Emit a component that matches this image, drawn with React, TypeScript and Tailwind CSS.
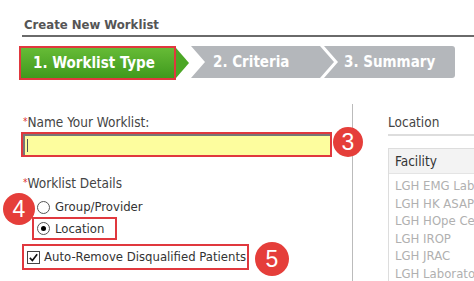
const font = "font-['DejaVu_Sans_Condensed','DejaVu_Sans',sans-serif]"

const facilities = ['LGH EMG Lab', 'LGH HK ASAP', 'LGH HOpe Ce', 'LGH IROP', 'LGH JRAC', 'LGH Laborato']

function Callout({ n, className }: { n: number; className: string }) {
  return (
    <div
      className={`absolute flex items-center justify-center rounded-full bg-[#e53e3a] text-white text-[23px] leading-none font-['Liberation_Sans',sans-serif] ${className}`}
    >
      {n}
    </div>
  )
}

export default function App() {
  return (
    <div className={`relative w-[474px] h-[281px] overflow-hidden bg-white ${font}`}>
      {/* title */}
      <div className="pl-[22px] pt-[18px]">
        <div className="border-b-2 border-[#6a6a6a] pb-[3px] pl-[2px] text-[13px] leading-[14px] font-bold text-[#555]">
          Create New Worklist
        </div>
      </div>

      {/* steps */}
      <div className="mt-[9px] flex h-[34px] items-start pl-[19px]">
        <div className="h-[34px] w-[157px] border-2 border-[#e0383e]">
          <div className="flex h-full items-center bg-gradient-to-b from-[#66bb36] to-[#3f9a1d] pl-[12px] text-[15px] font-bold text-white">
            1. Worklist Type
          </div>
        </div>
        <div className="mt-[2px] h-[30px] w-[13px] bg-[#4ca726] [clip-path:polygon(0_0,100%_50%,0_100%)]" />
        <div className="ml-[2px] flex h-[32px] w-[143px] items-center bg-[#b4b7bb] pl-[22px] text-[15px] font-bold text-white [clip-path:polygon(0_0,calc(100%-14px)_0,100%_50%,calc(100%-14px)_100%,0_100%,14px_50%)]">
          2. Criteria
        </div>
        <div className="ml-[-10px] flex h-[32px] w-[131px] items-center rounded-r-[3px] bg-[#b4b7bb] pl-[20px] text-[15px] font-bold text-white [clip-path:polygon(0_0,100%_0,100%_100%,0_100%,14px_50%)]">
          3. Summary
        </div>
      </div>

      {/* body */}
      <div className="mt-[34px] flex">
        <div className="w-[352px] shrink-0 pl-[21px]">
          <div className="pl-[2px] text-[13.5px] leading-[16px] text-[#444]">
            <span className="text-[#e03030] text-[10px] align-top">*</span>Name Your Worklist:
          </div>
          <div className="mt-[2px] h-[25px] w-[311px] border-2 border-[#e0383e]">
            <div className="flex h-full items-center border-l-2 border-t-2 border-[#777] bg-[#fdfd9e] pl-[2px]">
              <div className="h-[13px] w-px bg-[#555]" />
            </div>
          </div>

          <div className="mt-[18px] pl-[2px] text-[13.5px] leading-[16px] text-[#444]">
            <span className="text-[#e03030] text-[10px] align-top">*</span>Worklist Details
          </div>
          <div className="mt-[8px] flex items-center gap-[5px] pl-[16px] text-[13px] leading-[16px] text-[#333]">
            <span className="h-[13px] w-[13px] rounded-full border border-[#555] bg-white" />
            Group/Provider
          </div>
          <div className="ml-[11px] mt-[2px] flex h-[23px] w-[85px] items-center gap-[5px] border-2 border-[#e0383e] pl-[3px] text-[13px] text-[#333]">
            <span className="flex h-[13px] w-[13px] items-center justify-center rounded-full border border-[#555] bg-white">
              <span className="h-[5px] w-[5px] rounded-full bg-black" />
            </span>
            Location
          </div>
          <div className="ml-px mt-[4px] flex h-[26px] w-[227px] items-center gap-[4px] border-2 border-[#e0383e] pl-[3px] text-[13px] text-[#333]">
            <span className="flex h-[13px] w-[13px] items-center justify-center border border-[#444] bg-white">
              <svg viewBox="0 0 12 12" className="h-[11px] w-[11px]">
                <path d="M2 6.5 L4.8 9.3 L10 2.5" fill="none" stroke="#111" strokeWidth="1.8" />
              </svg>
            </span>
            Auto-Remove Disqualified Patients
          </div>
        </div>

        <div className="mt-[-10px] h-[200px] w-px shrink-0 bg-[#bbb]" />

        <div className="min-w-0 flex-1 overflow-hidden pl-[35px]">
          <div className="border-b-2 border-[#ddd] pb-[4px] text-[13.5px] leading-[16px] text-[#444]">Location</div>
          <div className="mt-[12px] border-l border-t border-[#ddd]">
            <div className="flex h-[25px] items-center border-b border-[#e4e4e4] bg-[#f3f3f3] pl-[6px] text-[13.5px] text-[#333]">
              Facility
            </div>
            <div className="pt-[3px]">
              {facilities.map(f => (
                <div key={f} className="h-[17.6px] whitespace-nowrap pl-[6px] text-[13px] leading-[17.6px] text-[#b0b0b0]">
                  {f}
                </div>
              ))}
            </div>
          </div>
        </div>
      </div>

      <Callout n={3} className="left-[333px] top-[127px] h-[30px] w-[30px]" />
      <Callout n={4} className="left-[3px] top-[193px] h-[32px] w-[32px]" />
      <Callout n={5} className="left-[255px] top-[242px] h-[34px] w-[34px]" />
    </div>
  )
}
